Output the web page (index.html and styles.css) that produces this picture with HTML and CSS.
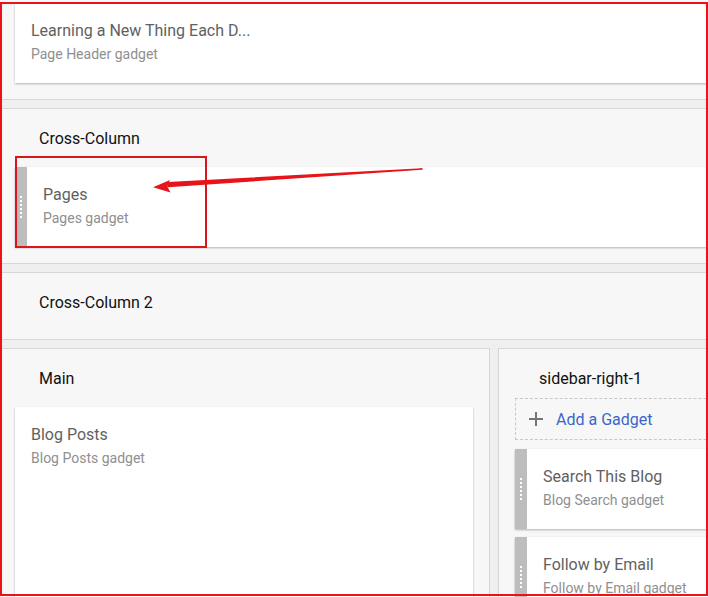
FILE: index.html
```html
<!DOCTYPE html>
<html lang="en">
<head>
    <meta charset="UTF-8">
    <meta name="viewport" content="width=device-width, initial-scale=1.0">
    <title>Layout</title>
    <link rel="stylesheet" href="styles.css">
</head>
<body>
    <div class="page">
        <div class="section section-header">
            <div class="card">
                <div class="card-body">
                    <div class="card-title">Learning a New Thing Each D...</div>
                    <div class="card-sub">Page Header gadget</div>
                </div>
            </div>
        </div>

        <div class="section">
            <div class="section-title">Cross-Column</div>
            <div class="widgets">
                <div class="card">
                    <div class="handle"></div>
                    <div class="card-body">
                        <div class="card-title">Pages</div>
                        <div class="card-sub">Pages gadget</div>
                    </div>
                </div>
            </div>
        </div>

        <div class="section">
            <div class="section-title">Cross-Column 2</div>
            <div class="widgets"></div>
        </div>

        <div class="columns">
            <div class="section column-main">
                <div class="section-title">Main</div>
                <div class="widgets">
                    <div class="card card-tall">
                        <div class="card-body">
                            <div class="card-title">Blog Posts</div>
                            <div class="card-sub">Blog Posts gadget</div>
                        </div>
                    </div>
                </div>
            </div>
            <div class="section column-side">
                <div class="section-title">sidebar-right-1</div>
                <div class="widgets">
                    <div class="add-gadget">
                        <svg class="plus" width="14" height="14" viewBox="0 0 14 14">
                            <path d="M7 0v14M0 7h14" stroke="#757575" stroke-width="2" fill="none"/>
                        </svg>
                        <span>Add a Gadget</span>
                    </div>
                    <div class="card">
                        <div class="handle"></div>
                        <div class="card-body">
                            <div class="card-title">Search This Blog</div>
                            <div class="card-sub">Blog Search gadget</div>
                        </div>
                    </div>
                    <div class="card">
                        <div class="handle"></div>
                        <div class="card-body">
                            <div class="card-title">Follow by Email</div>
                            <div class="card-sub">Follow by Email gadget</div>
                        </div>
                    </div>
                </div>
            </div>
        </div>
    </div>

    <!-- screenshot annotation -->
    <svg class="markup" width="708" height="597" viewBox="0 0 708 597">
        <rect x="1" y="3" width="706" height="592" fill="none" stroke="#e8141a" stroke-width="2"/>
        <rect x="16" y="157" width="190" height="90" fill="none" stroke="#d9161c" stroke-width="2"/>
        <path d="M422 169 L168 182.8 L168 186.4 Z" fill="#e8141a" stroke="#e8141a" stroke-width="1.6" stroke-linejoin="round"/>
        <path d="M153 187.2 L170 180 L167 186 L170.5 192.4 Z" fill="#e8141a"/>
    </svg>
</body>
</html>
```

FILE: styles.css
```css
html, body {
    margin: 0;
    overflow: hidden;
}
body {
    background-color: #efefef;
    font-family: Roboto, "Liberation Sans", sans-serif;
}
.page {
    width: 780px;
    margin-left: -2px;
    display: flex;
    flex-direction: column;
    gap: 8px;
}
.section {
    background-color: #f7f7f7;
    border: 1px solid #d6d6d6;
    padding: 0 16px 16px 16px;
}
.section-header {
    border-top: none;
    padding-top: 3px;
}
.section-title {
    padding: 21px 24px 0;
    font-size: 16px;
    line-height: 18px;
    color: #111;
}
.widgets {
    padding-top: 11px;
    display: flex;
    flex-direction: column;
}
.widgets .card {
    margin-top: 8px;
}
.card {
    display: flex;
    height: 80px;
    background-color: #fff;
    box-shadow: 0 1px 2px rgba(0,0,0,0.28);
}
.card-tall {
    height: 240px;
}
.handle {
    width: 12px;
    flex: none;
    background-color: #bdbdbd;
    display: flex;
    align-items: center;
    justify-content: center;
}
.handle::before {
    content: '';
    width: 2px;
    height: 22px;
    background: repeating-linear-gradient(#fff 0, #fff 2px, transparent 2px, transparent 4px);
}
.card-body {
    padding: 18px 16px 0;
}
.card-title {
    font-size: 16px;
    line-height: 20px;
    color: #616161;
}
.card-sub {
    margin-top: 5px;
    font-size: 14px;
    line-height: 16px;
    color: #8f8f8f;
}
.columns {
    display: flex;
    gap: 8px;
}
.column-main {
    width: 458px;
    flex: none;
}
.column-side {
    flex: 1;
    padding-bottom: 40px;
}
.add-gadget {
    height: 40px;
    margin-top: -1px;
    border: 1px dashed #c8c8c8;
    display: flex;
    align-items: center;
    padding-left: 13px;
    gap: 13px;
    font-size: 16px;
    color: #3a66c9;
}
.add-gadget + .card {
    margin-top: 9px;
}
.markup {
    position: fixed;
    top: 0;
    left: 0;
    pointer-events: none;
}
```
